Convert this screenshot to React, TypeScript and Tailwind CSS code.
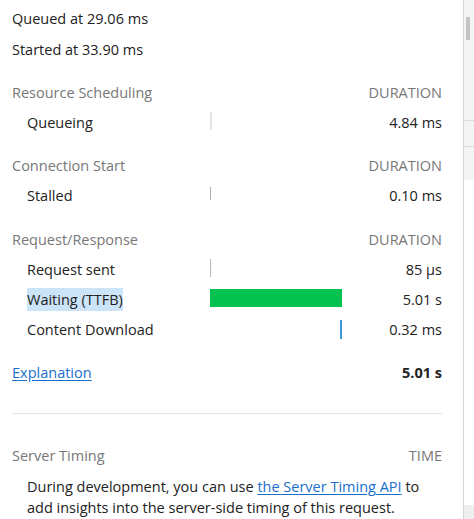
import React from "react";

const font = { fontFamily: '"Open Sans", "Noto Sans", sans-serif' };

function Header({ title, right }: { title: string; right: string }) {
  return (
    <div className="flex h-[30px] items-center justify-between text-[#777777]">
      <span>{title}</span>
      <span>{right}</span>
    </div>
  );
}

function Row({
  label,
  value,
  bar,
  highlight,
}: {
  label: string;
  value: string;
  bar: React.ReactNode;
  highlight?: boolean;
}) {
  return (
    <div className="grid h-[30px] grid-cols-[198px_133px_1fr] items-center text-[#222222]">
      <div className="pl-[15px]">
        <span className={highlight ? "bg-[#cce4f7] py-[2px]" : ""}>{label}</span>
      </div>
      <div className="relative h-[18px]">{bar}</div>
      <div className="text-right">{value}</div>
    </div>
  );
}

export default function App() {
  return (
    <div className="flex h-[519px] w-[474px] overflow-hidden bg-white text-[14.5px]" style={font}>
      <div className="w-[464px] border-r border-[#d6d6d6] pl-[12px] pr-[21px]">
        <div className="pt-[3px] text-[#222222]">
          <div className="flex h-[31px] items-center">Queued at 29.06 ms</div>
          <div className="flex h-[31px] items-center">Started at 33.90 ms</div>
        </div>

        <div className="mt-[13px]">
          <Header title="Resource Scheduling" right="DURATION" />
          <Row
            label="Queueing"
            value="4.84 ms"
            bar={<div className="absolute left-0 top-[-2px] h-[18px] w-[2px] bg-[#e6e6e6]" />}
          />
        </div>

        <div className="mt-[13px]">
          <Header title="Connection Start" right="DURATION" />
          <Row
            label="Stalled"
            value="0.10 ms"
            bar={<div className="absolute left-0 top-0 h-[13px] w-[1px] bg-[#b0b0b0]" />}
          />
        </div>

        <div className="mt-[14px]">
          <Header title="Request/Response" right="DURATION" />
          <Row
            label="Request sent"
            value="85 μs"
            bar={<div className="absolute left-0 top-[-2px] h-[18px] w-[1px] bg-[#b8b8b8]" />}
          />
          <Row
            label="Waiting (TTFB)"
            value="5.01 s"
            highlight
            bar={<div className="absolute left-0 top-[-2px] h-[18px] w-[132px] bg-[#03c24f]" />}
          />
          <Row
            label="Content Download"
            value="0.32 ms"
            bar={<div className="absolute left-[130px] top-[-1px] h-[19px] w-[2px] bg-[#3d98d6]" />}
          />
        </div>

        <div className="mt-[13px] flex h-[30px] items-center justify-between">
          <a className="text-[#1a6fce] underline underline-offset-2" href="#">
            Explanation
          </a>
          <span className="font-bold text-[#222222]">5.01 s</span>
        </div>

        <div className="mt-[25px] border-t border-[#e3e3e3]" />

        <div className="mt-[27px]">
          <Header title="Server Timing" right="TIME" />
          <p className="mt-[5px] pl-[15px] leading-[21px] text-[#222222]">
            During development, you can use{" "}
            <a className="text-[#1a6fce] underline underline-offset-2" href="#">
              the Server Timing API
            </a>{" "}
            to add insights into the server-side timing of this request.
          </p>
        </div>
      </div>
      <div className="relative flex w-[10px] flex-col">
        <div className="h-[180px] bg-[#f4f4f4]">
          <div className="ml-[2px] mt-[17px] h-[23px] w-[4px] bg-[#c4c4c4]" />
          <div className="mt-[80px] border-t border-[#dcdcdc]" />
          <div className="mt-[25px] border-t border-[#dcdcdc]" />
        </div>
        <div className="flex-1" />
        <div className="h-[14px] bg-[#eeeeee]" />
      </div>
    </div>
  );
}
